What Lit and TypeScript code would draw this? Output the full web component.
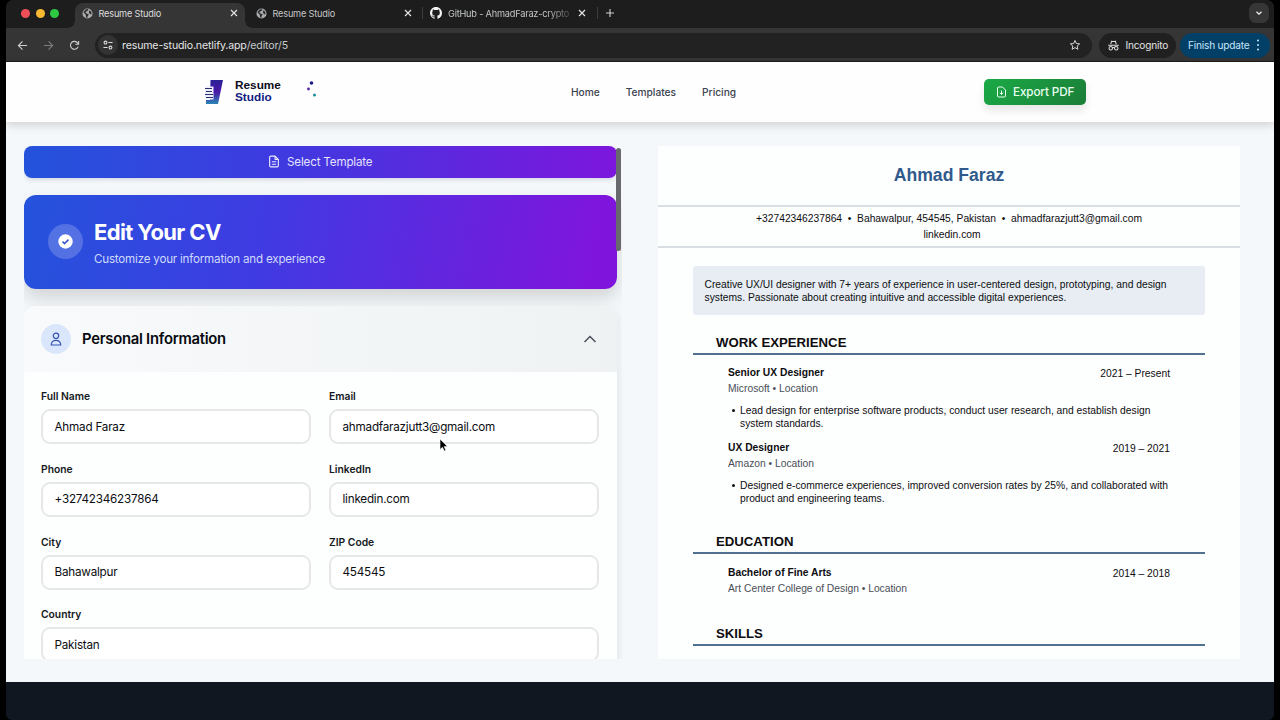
import { LitElement, html, css } from "lit";
import { customElement } from "lit/decorators.js";

const globe = html`<svg class="globe" viewBox="0 0 24 24"><circle cx="12" cy="12" r="11" fill="#a9abad"/><path d="M3 9 L8 14 L9 20 L12 22 L12 18 L15 14 L10 12 L7 9 L10 7 L14 5 L13 2 L8 3 Z M16 5 L20 8 L21 12 L18 14 L15 10 Z" fill="#2c2c2c"/></svg>`;
const close = html`<svg class="close" viewBox="0 0 8 8"><path d="M1 1 L7 7 M7 1 L1 7" stroke="currentColor" stroke-width="1.2" fill="none"/></svg>`;

interface Field { label: string; value: string; wide?: boolean }
const fields: Field[] = [
  { label: "Full Name", value: "Ahmad Faraz" },
  { label: "Email", value: "ahmadfarazjutt3@gmail.com" },
  { label: "Phone", value: "+32742346237864" },
  { label: "LinkedIn", value: "linkedin.com" },
  { label: "City", value: "Bahawalpur" },
  { label: "ZIP Code", value: "454545" },
  { label: "Country", value: "Pakistan", wide: true },
];

@customElement("browser-chrome")
class BrowserChrome extends LitElement {
  static styles = css`
    :host { display: block; height: 62px; background: #353535; color: #e3e3e3; font-family: Inter, sans-serif; border-bottom: 1px solid #1c1c1c; box-sizing: border-box; border-radius: 8px 8px 0 0; overflow: hidden; white-space: nowrap; }
    .strip { height: 28px; background: #1d1d1d; display: flex; align-items: flex-start; padding-left: 15px; padding-right: 5px; }
    .lights { display: flex; gap: 5.5px; padding-top: 9px; width: 54px; }
    .dot { width: 9px; height: 9px; border-radius: 50%; }
    .red { background: #f04f58; } .amber { background: #f8b932; } .green { background: #2ecb42; }
    .tab { height: 25px; margin-top: 3px; display: flex; align-items: center; font-size: 9.2px; letter-spacing: -.2px; color: #c4c6c8; box-sizing: border-box; padding-bottom: 4.5px; }
    .tab.on { background: #353535; width: 170px; border-radius: 8px 8px 0 0; color: #dedede; padding-left: 7px; position: relative; }
    .tab.on::before, .tab.on::after { content: ""; position: absolute; bottom: 0; width: 7px; height: 7px; }
    .tab.on::before { left: -7px; background: radial-gradient(circle at 0 0, transparent 6.5px, #353535 7px); }
    .tab.on::after { right: -7px; background: radial-gradient(circle at 100% 0, transparent 6.5px, #353535 7px); }
    .tab.two { width: 177px; padding-left: 11px; }
    .tab.three { width: 174px; padding-left: 7px; }
    .globe { width: 11px; height: 11px; margin-right: 5.5px; }
    .gh { width: 12px; height: 12px; margin-right: 6px; }
    .name { flex: 1; }
    .three .name { flex: none; width: 124px; mask-image: linear-gradient(90deg, #000 80%, rgba(0,0,0,.25) 98%); }
    .close { width: 8px; height: 8px; margin-right: 7.5px; color: #e3e3e3; }
    .two .close { margin-right: 10px; }
    .three .close { margin-left: 6px; margin-right: 0; }
    .sep { width: 1px; height: 12px; margin-top: 7px; background: #3d3d3d; }
    .plus { width: 10px; height: 10px; margin: 8px 0 0 7px; }
    .grow { flex: 1; }
    .down { width: 20px; height: 20px; margin-top: 3px; border-radius: 7px; background: #363636; display: grid; place-items: center; }
    .down svg { width: 8px; height: 8px; }
    .bar { height: 34px; display: flex; align-items: center; padding-left: 11px; padding-right: 4px; box-sizing: border-box; }
    .nav { width: 11px; height: 11px; margin-right: 15px; }
    .omni { flex: 1; height: 25px; margin-right: 7px; border-radius: 13px; background: #222; display: flex; align-items: center; padding: 0 11px 0 3px; }
    .site { width: 20px; height: 20px; border-radius: 50%; background: #333; display: grid; place-items: center; margin-right: 4px; }
    .site svg { width: 10px; height: 10px; }
    .url { flex: 1; font-size: 10.6px; letter-spacing: -.15px; color: #e4e5e6; } .url i { font-style: normal; color: #c5c7c9; }
    .star { width: 12px; height: 12px; }
    .pill { height: 25px; border-radius: 13px; display: flex; align-items: center; font-size: 10.1px; letter-spacing: -.2px; box-sizing: border-box; }
    .inc { width: 77px; background: #202020; padding-left: 9px; margin-right: 4px; } .inc svg { width: 11px; height: 11px; margin-right: 6.500px; }
    .upd { width: 90px; background: #034068; color: #c6e6fb; padding: 0 10px 0 8px; justify-content: space-between; } .upd svg { width: 4px; height: 12px; }
  `;
  render() {
    return html`
      <div class="strip">
        <div class="lights"><span class="dot red"></span><span class="dot amber"></span><span class="dot green"></span></div>
        <div class="tab on">${globe}<span class="name">Resume Studio</span>${close}</div>
        <div class="tab two">${globe}<span class="name">Resume Studio</span>${close}</div>
        <span class="sep"></span>
        <div class="tab three"><svg class="gh" viewBox="0 0 16 16"><path fill="#f4f4f4" d="M8 0C3.58 0 0 3.58 0 8c0 3.54 2.29 6.53 5.47 7.59.4.07.55-.17.55-.38 0-.19-.01-.82-.01-1.49-2.01.37-2.53-.49-2.69-.94-.09-.23-.48-.94-.82-1.13-.28-.15-.68-.52-.01-.53.63-.01 1.08.58 1.23.82.72 1.21 1.87.87 2.33.66.07-.52.28-.87.51-1.07-1.78-.2-3.64-.89-3.64-3.95 0-.87.31-1.59.82-2.15-.08-.2-.36-1.02.08-2.12 0 0 .67-.21 2.2.82a7.6 7.6 0 0 1 4 0c1.53-1.04 2.2-.82 2.2-.82.44 1.1.16 1.92.08 2.12.51.56.82 1.27.82 2.15 0 3.07-1.87 3.75-3.65 3.95.29.25.54.73.54 1.48 0 1.07-.01 1.93-.01 2.2 0 .21.15.46.55.38A8.01 8.01 0 0 0 16 8c0-4.42-3.58-8-8-8z"/></svg><span class="name">GitHub - AhmadFaraz-crypto</span>${close}</div>
        <span class="sep"></span>
        <svg class="plus" viewBox="0 0 10 10"><path d="M5 1V9M1 5H9" stroke="#d2d2d2" stroke-width="1.1"/></svg>
        <span class="grow"></span>
        <span class="down"><svg viewBox="0 0 8 8"><path d="M1.5 2.7 L4 5.2 L6.5 2.7" stroke="#eee" stroke-width="1.3" fill="none"/></svg></span>
      </div>
      <div class="bar">
        <svg class="nav" viewBox="0 0 12 12"><path d="M11 6H2M6 1.5L1.5 6L6 10.5" stroke="#cfcfcf" stroke-width="1.2" fill="none"/></svg>
        <svg class="nav" viewBox="0 0 12 12"><path d="M1 6H10M6 1.5L10.5 6L6 10.5" stroke="#7d7d7d" stroke-width="1.2" fill="none"/></svg>
        <svg class="nav" viewBox="0 0 12 12"><path d="M10 7.2A4.3 4.3 0 1 1 9.4 3.3L10.4 4.4M10.5 1V4.6H6.9" stroke="#cfcfcf" stroke-width="1.2" fill="none"/></svg>
        <div class="omni">
          <span class="site"><svg viewBox="0 0 12 12"><g stroke="#dcdcdc" stroke-width="1.3" fill="none"><circle cx="3" cy="3" r="1.7"/><path d="M6.5 3H11.5M.5 9H5.5"/><circle cx="9" cy="9" r="1.7"/></g></svg></span>
          <span class="url">resume-studio.netlify.app<i>/editor/5</i></span>
          <svg class="star" viewBox="0 0 24 24"><path d="M12 3l2.7 6.1 6.6.6-5 4.4 1.5 6.5L12 17.2l-5.8 3.4 1.5-6.5-5-4.4 6.6-.6z" fill="none" stroke="#d8d8d8" stroke-width="2"/></svg>
        </div>
        <div class="pill inc"><svg viewBox="0 0 24 24"><g fill="none" stroke="#e3e3e3" stroke-width="2.2"><path d="M6 9L8 2.5C10 3.5 14 3.5 16 2.5L18 9M0.5 11.5H23.5"/><circle cx="6" cy="18" r="3.8"/><circle cx="18" cy="18" r="3.8"/><path d="M9.5 17C11 16 13 16 14.5 17"/></g></svg><span>Incognito</span></div>
        <div class="pill upd"><span>Finish update</span><svg viewBox="0 0 4 12"><g fill="#c6e6fb"><circle cx="2" cy="1.5" r="1"/><circle cx="2" cy="6" r="1"/><circle cx="2" cy="10.5" r="1"/></g></svg></div>
      </div>`;
  }
}

@customElement("site-header")
class SiteHeader extends LitElement {
  static styles = css`
    :host { display: flex; height: 59.5px; box-sizing: border-box; background: #fefefe; align-items: center; padding: 0 188px 0 198px; font-family: Inter, sans-serif; justify-content: space-between; box-shadow: 0 3px 9px rgba(0,0,0,.16); position: relative; z-index: 2; }
    .brand { display: flex; align-items: center; width: 247px; }
    .mark { width: 20px; height: 26px; margin-right: 11px; }
    .word { font: bold 11.8px/12px "Liberation Sans", sans-serif; color: #0b0b1c; margin-top: -2px; } .word b { display: block; color: #101c82; }
    .spin { width: 12px; height: 18px; margin-left: 24px; margin-top: -7px; }
    nav { display: flex; gap: 26px; font-size: 10.2px; font-weight: 500; color: #3b434f; }
    .side { width: 230px; display: flex; justify-content: flex-end; }
    .exp { width: 102px; height: 26px; border-radius: 5px; background: linear-gradient(135deg, #1aaa46, #1b7d37); color: #e9fff0; display: flex; align-items: center; box-sizing: border-box; padding-left: 12px; font-size: 11.7px; letter-spacing: -.12px; font-weight: 500; gap: 6px; box-shadow: 0 6px 9px rgba(0,0,0,.09); }
    .exp svg { width: 11px; height: 12px; }
  `;
  render() {
    return html`
      <div class="brand">
        <svg class="mark" viewBox="0 0 20 26"><defs><linearGradient id="g" x1="0" y1="0" x2="0" y2="1"><stop offset="0" stop-color="#2a2195"/><stop offset=".5" stop-color="#4a17a8"/><stop offset="1" stop-color="#2a86b4"/></linearGradient></defs><path d="M6.500 1H19L14 25H2V21H6z" fill="url(#g)"/><path d="M1 7.500H9.500V20.500H1z" fill="#eeeefc"/><path d="M1 9.500H8M2 12.500H8M1 15.500H9M2 18.500H9" stroke="#29306f" stroke-width="1.100"/></svg>
        <span class="word">Resume<b>Studio</b></span>
        <svg class="spin" viewBox="0 0 12 18"><circle cx="6.500" cy="4" r="1.800" fill="#1b1b8e"/><circle cx="3.500" cy="10" r="1.400" fill="#5124a8"/><circle cx="9.500" cy="16" r="1.500" fill="#1c8d95"/></svg>
      </div>
      <nav><span>Home</span><span>Templates</span><span>Pricing</span></nav>
      <div class="side"><div class="exp"><svg viewBox="0 0 22 24"><path d="M13 2H5a2 2 0 0 0-2 2v16a2 2 0 0 0 2 2h12a2 2 0 0 0 2-2V8zM11 9v8M7.500 13.500L11 17l3.500-3.500" fill="none" stroke="#e9fff0" stroke-width="2" stroke-linejoin="round"/></svg><span>Export PDF</span></div></div>`;
  }
}

@customElement("cv-form")
class CvForm extends LitElement {
  static styles = css`
    :host { display: block; width: 598px; height: 513px; overflow: hidden; position: relative; font-family: Inter, sans-serif; }
    .col { width: 592.5px; }
    .thumb { position: absolute; left: 592px; top: 2px; width: 5px; height: 103px; border-radius: 3px; background: #68696d; }
    .select { height: 32px; border-radius: 8px; background: linear-gradient(90deg, #2453dc, #4039e0 45%, #7d16dc); display: flex; align-items: center; justify-content: center; gap: 7px; color: #e4e2fc; font-size: 11.6px; letter-spacing: -.16px; box-shadow: 0 2px 4px rgba(30,30,80,.14); }
    .select svg { width: 12px; height: 13px; }
    .hero { margin-top: 17.5px; height: 93.5px; border-radius: 12px; background: linear-gradient(100deg, #2453dc, #3f3be2 40%, #7f15dd 95%); display: flex; align-items: center; padding-left: 23.5px; box-sizing: border-box; color: #fff; box-shadow: 0 9px 18px rgba(0,0,0,.15); }
    .badge { width: 35px; height: 35px; border-radius: 50%; background: rgba(255,255,255,.2); display: grid; place-items: center; margin-right: 11.5px; }
    .badge svg { width: 15px; height: 15px; }
    .copy { padding-top: 3px; }
    h1 { margin: 0; font-size: 22px; letter-spacing: -.62px; line-height: 27px; font-weight: 700; }
    .sub { font-size: 11.6px; letter-spacing: -.2px; line-height: 18px; color: #cfdafa; padding-top: 4px; }
    .card { margin-top: 17.5px; height: 500px; background: #fdfefe; box-shadow: 2px 3px 8px rgba(0,0,0,.07); border-radius: 12px; }
    .head { height: 65.5px; display: flex; align-items: center; padding: 0 20px 0 17px; box-sizing: border-box; background: linear-gradient(90deg, #f8fafb, #eff2f3); border-radius: 12px 12px 0 0; }
    .ic { width: 30px; height: 30px; border-radius: 50%; background: #d9e6fb; display: grid; place-items: center; margin-right: 11px; }
    .ic svg { width: 12px; height: 14px; }
    h2 { margin: 0; flex: 1; font-size: 14.8px; letter-spacing: -.25px; font-weight: 600; color: #07090f; }
    .chev { width: 14px; height: 10px; }
    .grid { padding: 17.5px 17px 0; display: grid; grid-template-columns: 270px 270px; column-gap: 18px; row-gap: 17.8px; }
    .wide { grid-column: span 2; }
    .lab { display: block; height: 15px; line-height: 15px; font-size: 10.3px; font-weight: 600; color: #141922; margin-bottom: 5px; }
    .box { height: 35px; box-sizing: border-box; border: 2px solid #e6e7e9; border-radius: 9px; display: flex; align-items: center; padding-left: 11.5px; font-size: 11.7px; letter-spacing: -.22px; color: #0b0d12; background: #fff; }
  `;
  render() {
    return html`
      <div class="col">
        <div class="select"><svg viewBox="0 0 22 24"><path d="M13 2H5a2 2 0 0 0-2 2v16a2 2 0 0 0 2 2h12a2 2 0 0 0 2-2V8zM13 2V8H19M7 12.500H15M7 17H15" fill="none" stroke="#eceaff" stroke-width="2.100" stroke-linejoin="round"/></svg><span>Select Template</span></div>
        <div class="hero">
          <span class="badge"><svg viewBox="0 0 16 16"><circle cx="8" cy="8" r="7.700" fill="#fff"/><path d="M4.800 8.200L7 10.300L11.200 6" stroke="#4058c8" stroke-width="1.700" fill="none"/></svg></span>
          <div class="copy"><h1>Edit Your CV</h1><div class="sub">Customize your information and experience</div></div>
        </div>
        <div class="card">
          <div class="head"><span class="ic"><svg viewBox="0 0 12 14"><g fill="none" stroke="#3651b0" stroke-width="1.200"><circle cx="6" cy="3.800" r="2.700"/><path d="M1.200 13C1.200 6.800 10.800 6.800 10.800 13z" stroke-linejoin="round"/></g></svg></span><h2>Personal Information</h2><svg class="chev" viewBox="0 0 14 10"><path d="M1.500 8L7 2.500L12.500 8" fill="none" stroke="#4a5058" stroke-width="1.500"/></svg></div>
          <div class="grid">${fields.map((f) => html`<div class=${f.wide ? "wide" : ""}><span class="lab">${f.label}</span><div class="box">${f.value}</div></div>`)}</div>
        </div>
      </div>
      <span class="thumb"></span>`;
  }
}

@customElement("cv-preview")
class CvPreview extends LitElement {
  static styles = css`
    :host { display: block; width: 582px; height: 513px; overflow: hidden; background: #fdfefe; font-family: "Liberation Sans", Arial, sans-serif; color: #0d0d10; font-size: 10.29px; white-space: nowrap; }
    .name { height: 59px; display: flex; align-items: center; justify-content: center; font-size: 17.6px; font-weight: bold; color: #305a8c; }
    .contact { border: solid #d9dee2; border-width: 2px 0; height: 43px; box-sizing: border-box; text-align: center; line-height: 16px; padding-top: 4px; }
    .contact i { font-style: normal; margin: 0 5.7px; }
    .link { padding-left: 6px; }
    .sum { margin: 18px 35px 0; height: 49px; border-radius: 3px; background: #e7edf3; padding: 12px 11.5px; box-sizing: border-box; line-height: 13px; }
    h3 { margin: 18px 35px 0; padding-left: 23px; font-size: 13.2px; line-height: 20px; height: 20px; font-weight: bold; border-bottom: 2px solid #52708f; }
    .job + h3 { margin-top: 27.5px; }
    .job { margin: 10.5px 70px 0 70px; }
    .row { display: flex; justify-content: space-between; line-height: 16px; height: 16px; }
    .date { padding-top: 1px; }
    .at { line-height: 16px; height: 16px; color: #4a4f57; }
    ul { margin: 6.5px 0 0; padding-left: 12px; list-style: none; line-height: 13px; }
    li { position: relative; } li::before { content: ""; position: absolute; left: -8.5px; top: 5.5px; width: 3px; height: 3px; border-radius: 50%; background: #111; }
  `;
  job(title: string, date: string, at: string, lines: string[]) {
    return html`<div class="job"><div class="row"><b>${title}</b><div class="date">${date}</div></div><div class="at">${at}</div>${lines.length ? html`<ul><li>${lines.map((l) => html`<div>${l}</div>`)}</li></ul>` : ""}</div>`;
  }
  render() {
    return html`
      <div class="name">Ahmad Faraz</div>
      <div class="contact"><div>+32742346237864<i>•</i>Bahawalpur, 454545, Pakistan<i>•</i>ahmadfarazjutt3@gmail.com</div><div class="link">linkedin.com</div></div>
      <div class="sum"><div>Creative UX/UI designer with 7+ years of experience in user-centered design, prototyping, and design</div><div>systems. Passionate about creating intuitive and accessible digital experiences.</div></div>
      <h3>WORK EXPERIENCE</h3>
      ${this.job("Senior UX Designer", "2021 – Present", "Microsoft • Location", ["Lead design for enterprise software products, conduct user research, and establish design", "system standards."])}
      ${this.job("UX Designer", "2019 – 2021", "Amazon • Location", ["Designed e-commerce experiences, improved conversion rates by 25%, and collaborated with", "product and engineering teams."])}
      <h3>EDUCATION</h3>
      ${this.job("Bachelor of Fine Arts", "2014 – 2018", "Art Center College of Design • Location", [])}
      <h3>SKILLS</h3>`;
  }
}

@customElement("app-root")
class AppRoot extends LitElement {
  static styles = css`
    :host { display: block; width: 1280px; height: 720px; background: #000; overflow: hidden; }
    .win { margin: 0 6px; height: 720px; display: flex; flex-direction: column; position: relative; }
    .main { flex: 1; min-height: 0; background: #f5f8fa; display: flex; padding: 24px 34px 0 18px; justify-content: space-between; }
    .foot { height: 38px; background: #101720; border-radius: 0 0 6px 6px; }
    .ptr { position: absolute; left: 433px; top: 438px; width: 9px; height: 14px; }
  `;
  render() {
    return html`<div class="win"><browser-chrome></browser-chrome><site-header></site-header>
      <div class="main"><cv-form></cv-form><cv-preview></cv-preview></div>
      <div class="foot"></div>
      <svg class="ptr" viewBox="0 0 9 14"><path d="M1 1V11.500L3.500 9.300L5.200 13L6.800 12.300L5.200 8.600H8.500z" fill="#000" stroke="#fff" stroke-width=".6"/></svg></div>`;
  }
}
